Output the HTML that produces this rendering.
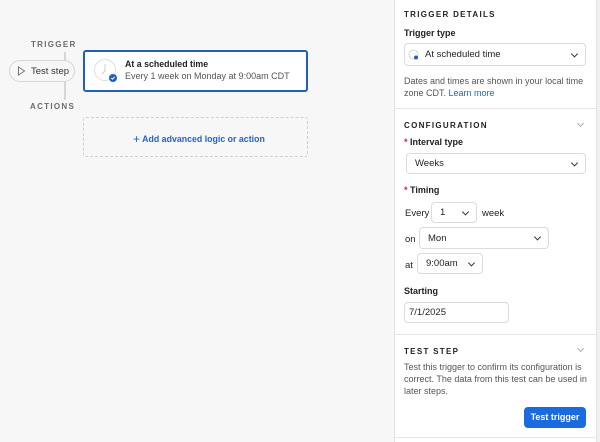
<!DOCTYPE html>
<html><head><style>
*{box-sizing:border-box;margin:0;padding:0}
body{width:600px;height:442px;background:#f7f7f8;font-family:"Liberation Sans",sans-serif;position:relative;overflow:hidden;color:#1f1f1f}
.a{position:absolute}
.cap{font-size:8px;letter-spacing:1.3px;font-weight:bold;color:#6b6b6b}
.h{font-size:8px;letter-spacing:1.3px;font-weight:bold;color:#222}
.lbl{font-size:9px;font-weight:bold;color:#222}
.t{font-size:9.5px;color:#222}
.sel{position:absolute;border:1px solid #dcdcdc;border-radius:4px;background:#fff;font-size:9.5px;padding-left:8px;display:flex;align-items:center}
.chev{position:absolute;right:8px;top:50%;width:5px;height:5px;border-right:1.2px solid #333;border-bottom:1.2px solid #333;transform:translateY(-70%) rotate(45deg)}
.chevl{position:absolute;width:5px;height:5px;border-right:1px solid #aaa;border-bottom:1px solid #aaa;transform:rotate(45deg)}
.p{font-size:9px;color:#555;line-height:12px}
.star{color:#d0243a}
</style></head><body>
<div class="a cap" style="left:31px;top:40px">TRIGGER</div>
<div class="a" style="left:64px;top:52px;width:1.5px;height:48px;background:#d6d6d6"></div>
<div class="a" style="left:9px;top:60px;width:66px;height:22px;border:1px solid #d6d6d6;border-radius:11px;background:#f7f7f8;font-size:9.5px;padding:5px 0 0 21px;color:#333">Test step</div>
<svg class="a" style="left:17px;top:66px" width="9" height="10"><path d="M1.5 1 L7.5 5 L1.5 9 Z" fill="none" stroke="#777" stroke-width="1"/></svg>
<div class="a cap" style="left:30px;top:102px">ACTIONS</div>
<div class="a" style="left:83px;top:50px;width:225px;height:42px;border:2px solid #1f5fbf;border-radius:3px;background:#fff"></div>
<svg class="a" style="left:93px;top:58px" width="26" height="26"><circle cx="12" cy="12" r="10.5" fill="#fff" stroke="#ddd" stroke-width="1"/><path d="M12 6 V13 L9 16" fill="none" stroke="#ccc" stroke-width="1"/><circle cx="20" cy="20" r="4" fill="#1f5fbf"/><path d="M18.3 20 L19.5 21.2 L21.7 18.8" stroke="#fff" stroke-width="1" fill="none"/></svg>
<div class="a" style="left:125px;top:59px;font-size:8.8px;font-weight:bold">At a scheduled time</div>
<div class="a" style="left:125px;top:71px;font-size:9px;color:#555">Every 1 week on Monday at 9:00am CDT</div>
<div class="a" style="left:83px;top:117px;width:225px;height:40px;border:1px dashed #cfcfcf;border-radius:3px"></div>
<div class="a" style="left:133px;top:131px;font-size:8.8px;font-weight:bold;color:#1f63d1"><span style="font-weight:normal;font-size:12px;position:relative;top:1px">+</span> Add advanced logic or action</div>

<div class="a" style="left:394px;top:0;width:203px;height:442px;background:#fff;border-left:1px solid #e2e2e2;border-right:1px solid #e2e2e2"></div>
<div class="a" style="left:597px;top:0;width:3px;height:442px;background:#f0f0f0"></div>
<div class="a h" style="left:404px;top:10px">TRIGGER DETAILS</div>
<div class="a lbl" style="left:404px;top:28px">Trigger type</div>
<div class="sel" style="left:404px;top:43px;width:182px;height:23px;padding-left:20px">At scheduled time<span class="chev"></span></div>
<svg class="a" style="left:408px;top:49px" width="12" height="12"><circle cx="5.5" cy="5.5" r="4.5" fill="#fff" stroke="#ccc" stroke-width=".8"/><circle cx="8" cy="8.5" r="2" fill="#1f5fbf"/></svg>
<div class="a p" style="left:404px;top:75px;width:186px">Dates and times are shown in your local time zone CDT. <span style="color:#1f63d1">Learn more</span></div>
<div class="a" style="left:395px;top:108px;width:202px;height:1px;background:#e6e6e6"></div>
<div class="a h" style="left:404px;top:121px">CONFIGURATION</div>
<span class="chevl" style="left:578px;top:121px"></span>
<div class="a lbl" style="left:404px;top:137px"><span class="star">*</span> Interval type</div>
<div class="sel" style="left:406px;top:153px;width:180px;height:21px">Weeks<span class="chev"></span></div>
<div class="a lbl" style="left:404px;top:185px"><span class="star">*</span> Timing</div>
<div class="a t" style="left:405px;top:208px">Every</div>
<div class="sel" style="left:431px;top:202px;width:46px;height:21px">1<span class="chev"></span></div>
<div class="a t" style="left:482px;top:208px">week</div>
<div class="a t" style="left:405px;top:234px">on</div>
<div class="sel" style="left:419px;top:227px;width:130px;height:22px">Mon<span class="chev"></span></div>
<div class="a t" style="left:405px;top:260px">at</div>
<div class="sel" style="left:417px;top:253px;width:66px;height:21px">9:00am<span class="chev"></span></div>
<div class="a lbl" style="left:404px;top:286px">Starting</div>
<div class="sel" style="left:404px;top:302px;width:105px;height:21px;padding-left:4px">7/1/2025</div>
<div class="a" style="left:395px;top:334px;width:202px;height:1px;background:#e6e6e6"></div>
<div class="a h" style="left:404px;top:347px">TEST STEP</div>
<span class="chevl" style="left:578px;top:346px"></span>
<div class="a p" style="left:404px;top:361px;width:186px">Test this trigger to confirm its configuration is correct. The data from this test can be used in later steps.</div>
<div class="a" style="left:524px;top:407px;width:62px;height:21px;background:#1a6ae0;border-radius:4px;color:#fff;font-size:9px;font-weight:bold;text-align:center;line-height:21px">Test trigger</div>
<div class="a" style="left:395px;top:437px;width:202px;height:1px;background:#e6e6e6"></div>
</body></html>
